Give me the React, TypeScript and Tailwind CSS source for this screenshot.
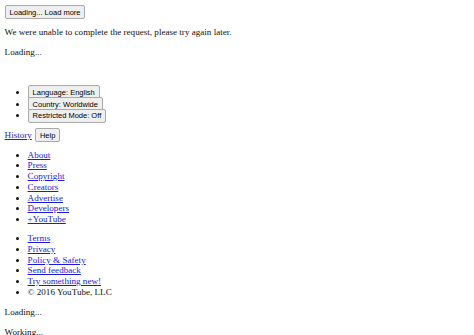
const btn =
  "inline-block rounded-[2px] border border-[#a9a9a9] bg-[#efefef] px-[4px] py-[1.5px] font-['Liberation_Sans',Arial,sans-serif] text-[7.5px] leading-[9px] text-black";

const links1 = ['About', 'Press', 'Copyright', 'Creators', 'Advertise', 'Developers', '+YouTube'];
const links2 = ['Terms', 'Privacy', 'Policy & Safety', 'Send feedback', 'Try something new!'];

export default function App() {
  return (
    <div className="h-[335px] w-[474px] overflow-hidden bg-white px-[4.6px] pt-[5px] font-['Liberation_Serif','Times_New_Roman',serif] text-[9.1px] leading-[10.7px] text-[#111]">
      <button className={btn}>Loading... Load more</button>
      <p className="mt-[8px]">We were unable to complete the request, please try again later.</p>
      <p className="mt-[9px]">Loading...</p>

      <ul className="mt-[28px] list-disc pl-[23px]">
        {['Language: English', 'Country: Worldwide', 'Restricted Mode: Off'].map((t) => (
          <li key={t} className="h-[11.6px]">
            <button className={btn}>{t}</button>
          </li>
        ))}
      </ul>

      <div className="mt-[8px] flex items-center gap-[3px]">
        <a href="#" className="text-[#1a1ae0] underline">History</a>
        <button className={btn}>Help</button>
      </div>

      <ul className="mt-[7.5px] list-disc pl-[23px]">
        {links1.map((t) => (
          <li key={t}>
            <a href="#" className="text-[#1a1ae0] underline">{t}</a>
          </li>
        ))}
      </ul>

      <ul className="mt-[8.5px] list-disc pl-[23px]">
        {links2.map((t) => (
          <li key={t}>
            <a href="#" className="text-[#1a1ae0] underline">{t}</a>
          </li>
        ))}
        <li>© 2016 YouTube, LLC</li>
      </ul>

      <p className="mt-[10px]">Loading...</p>
      <p className="mt-[8.5px]">Working...</p>
    </div>
  );
}
